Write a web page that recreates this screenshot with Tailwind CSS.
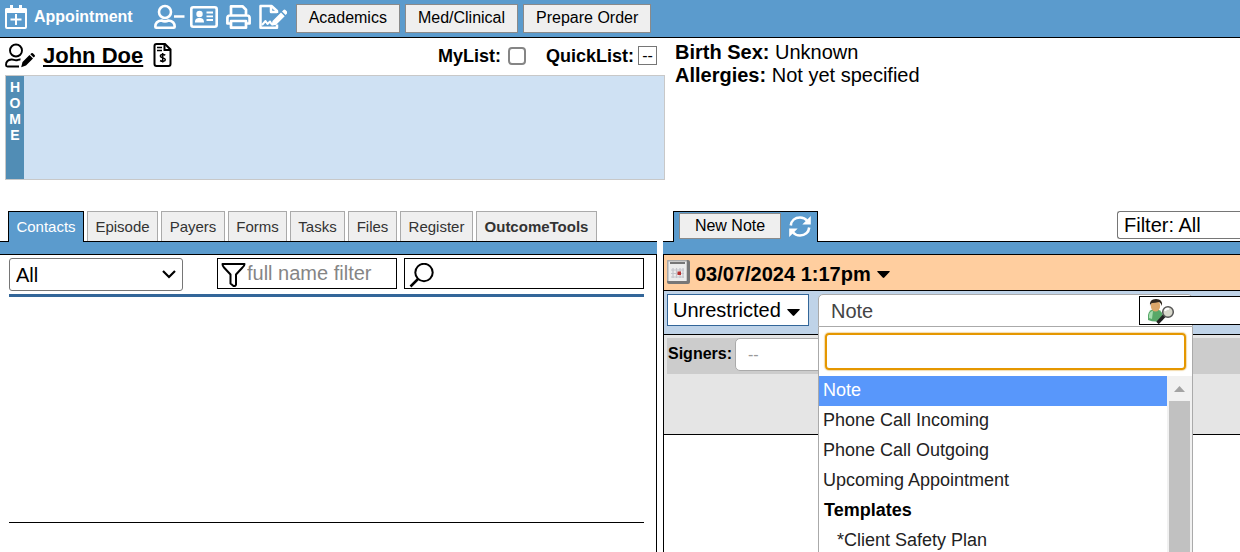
<!DOCTYPE html>
<html lang="en">
<head>
<meta charset="utf-8">
<title>John Doe - Chart</title>
<script src="https://cdn.jsdelivr.net/npm/@tailwindcss/browser@4"></script>
</head>
<body class="flex h-screen flex-col overflow-hidden bg-white font-['Liberation_Sans',Arial,sans-serif] text-black">

<header class="flex h-[38px] shrink-0 items-start border-b border-black bg-[#5b9bcd] pt-1 pl-[5px] text-white">
  <a href="#" class="flex items-start gap-[7px] text-base font-bold leading-[26px]">
    <svg class="h-[26px] w-[22px]" viewBox="0 0 22 26" fill="none" stroke="currentColor" stroke-width="2"><rect x="1" y="5" width="20" height="19" rx="1"/><path d="M0 6q0-2 2-2h18q2 0 2 2v3H0z" fill="currentColor" stroke="none"/><path d="M6.500 1v5M15.500 1v5" stroke-width="3"/><path d="M11 10v11M5.500 15.500h11"/></svg>
    <span>Appointment</span>
  </a>
  <nav class="ml-[21px] flex gap-[5px]">
    <button aria-label="Remove person"><svg class="h-[26px] w-[31px]" viewBox="0 0 31 26" fill="none" stroke="currentColor" stroke-width="2.600"><ellipse cx="11" cy="8" rx="6" ry="6"/><path d="M7.500 16.500c-4 .5-6.200 3-6.200 6.200q0 1 1 1h17.400q1 0 1-1c0-3.200-2.200-5.700-6.200-6.200-2 1-5 1-7 0zM20 12.500h10.500"/></svg></button>
    <button aria-label="ID card"><svg class="h-[26px] w-[28px]" viewBox="0 0 28 26"><rect x="1.300" y="3.300" width="25.400" height="19.400" rx="2" fill="none" stroke="currentColor" stroke-width="2.600"/><g fill="currentColor"><circle cx="9.500" cy="10" r="3.200"/><path d="M5 18.500c0-3.500 1.500-4.500 4.500-4.500s4.500 1 4.500 4.500zM16.500 7.500h6.500v2h-6.500zM16.500 11.500h6.500v1.700h-6.500zM16.500 15h6.500v2h-6.500z"/></g></svg></button>
    <button aria-label="Print" class="ml-[3px]"><svg class="h-[26px] w-[25px]" viewBox="0 0 25 26" fill="none" stroke="currentColor" stroke-width="2.700" stroke-linejoin="round"><path d="M5 12V2.300h11.500l3.500 3.500V12M5 19.500H1.400V14q0-2.500 2.500-2.500h17.200q2.500 0 2.500 2.500v5.500H20M5 17h15v6.700H5z"/></svg></button>
    <button aria-label="Sign document" class="ml-[3px]"><svg class="h-[26px] w-[28px]" viewBox="0 0 28 26" fill="none" stroke="currentColor" stroke-width="2.500" stroke-linejoin="round"><path d="M18 9V7l-5.500-5H1.500v21.700H18V20.500"/><path d="M12 2v6h6"/><path d="M3 21l3.500-4 2 3 2.500-2.500 1.500 2.500h4" stroke-width="2"/><path d="M13.500 17L22 8.500l3.700 3.700L17.200 20.700l-4.700 1.100zM23 7.500l1.500-1.500q1-.8 2 0l1.500 1.600q.8 1 0 2l-1.400 1.500z" fill="currentColor" stroke="none"/></svg></button>
  </nav>
  <div class="ml-[9px] flex gap-[5px] text-base leading-6 text-black">
    <button class="h-[29px] border border-[#8a8a8a] bg-[#efefef] px-3 pb-[2px]">Academics</button>
    <button class="h-[29px] border border-[#8a8a8a] bg-[#efefef] px-3 pb-[2px]">Med/Clinical</button>
    <button class="h-[29px] border border-[#8a8a8a] bg-[#efefef] px-3 pb-[2px]">Prepare Order</button>
  </div>
</header>

<section class="grid h-[173px] shrink-0 grid-cols-[665fr_575fr]">
  <div class="pl-[5px]">
    <div class="flex h-[37px] items-center pr-2 pb-[2px]">
      <svg class="h-[26px] w-[30px]" viewBox="0 0 30 26" fill="none" stroke="currentColor" stroke-width="1.900"><circle cx="11" cy="7.500" r="6"/><path d="M15.500 16.500c-2-.3-2.500.8-4.500.8s-2.500-1-4.500-.8c-3.500.3-5.500 2-5.500 5.500q0 1.500 1.500 1.500H14"/><path d="M17.500 19l7-7 3.500 3.500-7 7-4.800 1.800zM25.300 11.200l1-1q.8-.6 1.600 0l1.700 1.700q.8.900 0 1.800l-.9.900z" fill="currentColor" stroke="none"/></svg>
      <a href="#" class="ml-2 text-[22px] font-bold leading-6 underline decoration-2 underline-offset-2">John Doe</a>
      <button aria-label="Billing" class="ml-[10px]"><svg class="h-[26px] w-[19px]" viewBox="0 0 19 26" fill="none" stroke="currentColor" stroke-width="2"><path d="M1.500 3q0-2 2-2H12l5.500 5.500V21q0 2-2 2h-12q-2 0-2-2z"/><path d="M11.500 1v6h6"/><path d="M4 4.500h5M4 7.500h5" stroke-width="1.500"/><path d="M12.300 12.200c-2-1.200-5-.9-5 .9 0 2.200 5 1.300 5 3.600 0 1.900-3.300 2-5.200.8M9.700 10v9.500" stroke-width="1.500"/></svg></button>
      <div class="ml-auto flex items-center text-lg font-bold leading-6">
        <label for="mylist">MyList:</label>
        <input id="mylist" type="checkbox" class="ml-[7px] size-[18px] appearance-none rounded-[4px] border-2 border-[#858585] bg-white">
        <label for="quick" class="ml-5">QuickList:</label>
        <button id="quick" class="ml-1 h-[19px] w-[19px] border border-[#767676] text-base font-normal leading-4">--</button>
      </div>
    </div>
    <div class="flex h-[105px] border border-[#c8c8c8] bg-[#cfe1f3]">
      <button class="flex w-[18px] flex-col items-center bg-[#518db5] pt-[3px] text-sm font-bold leading-4 text-white" aria-label="Home"><span>H</span><span>O</span><span>M</span><span>E</span></button>
    </div>
  </div>
  <div class="pl-[10px] pt-[3px] text-xl leading-[23px]">
    <p><b>Birth Sex:</b> Unknown</p>
    <p><b>Allergies:</b> Not yet specified</p>
  </div>
</section>

<main class="grid min-h-0 flex-1 grid-cols-[657fr_577fr] gap-x-[6px]">
  <section class="flex min-w-0 flex-col">
    <nav class="flex h-[31px] items-start gap-[3px] pl-2 text-[15px] text-[#333]">
      <button class="z-10 h-[31px] w-[76px] border border-b-0 border-black bg-[#5b9bcd] text-white">Contacts</button>
      <button class="h-[30px] w-[71px] border border-b-0 border-[#aaa] bg-[#efefef] pt-px">Episode</button>
      <button class="h-[30px] w-16 border border-b-0 border-[#aaa] bg-[#efefef] pt-px">Payers</button>
      <button class="h-[30px] w-[59px] border border-b-0 border-[#aaa] bg-[#efefef] pt-px">Forms</button>
      <button class="h-[30px] w-[55px] border border-b-0 border-[#aaa] bg-[#efefef] pt-px">Tasks</button>
      <button class="h-[30px] w-[49px] border border-b-0 border-[#aaa] bg-[#efefef] pt-px">Files</button>
      <button class="h-[30px] w-[73px] border border-b-0 border-[#aaa] bg-[#efefef] pt-px">Register</button>
      <button class="h-[30px] w-[121px] border border-b-0 border-[#aaa] bg-[#efefef] pt-px font-bold">OutcomeTools</button>
    </nav>
    <div class="-mt-px h-[14px] shrink-0 border-y border-black bg-[#5b9bcd]"></div>
    <div class="flex flex-1 flex-col border-r border-black pt-[3px] pr-3 pb-[29px] pl-[9px]">
      <div class="flex items-start">
        <div class="relative">
          <select aria-label="Contact type" class="h-[33px] w-[174px] appearance-none rounded-[3px] border border-[#767676] bg-white pl-[6px] text-xl leading-6"><option>All</option></select>
          <svg class="pointer-events-none absolute top-[11px] right-[7px] h-[10px] w-[14px]" viewBox="0 0 14 10" fill="none" stroke="currentColor" stroke-width="2.200"><path d="M1 2l6 6 6-6"/></svg>
        </div>
        <label class="ml-[34px] flex h-[31px] w-[180px] items-start border border-black">
          <svg class="mt-[3px] ml-[3px] h-[26px] w-[25px] shrink-0" viewBox="0 0 25 26" fill="none" stroke="currentColor" stroke-width="2" stroke-linejoin="round"><path d="M1.500 2h22q0 2-2 3.500L15 12.500v10q-.5 2-2.500 1.500L9.500 21.500v-9L3 5.500Q1.500 4 1.500 2z"/></svg>
          <input aria-label="Full name filter" placeholder="full name filter" class="ml-px h-7 min-w-0 flex-1 text-xl leading-7 outline-none placeholder:text-[#858585]">
        </label>
        <label class="ml-[7px] flex h-[31px] min-w-0 flex-1 items-start border border-black">
          <svg class="mt-1 ml-1 h-[25px] w-[26px] shrink-0" viewBox="0 0 26 25" fill="none" stroke="currentColor" stroke-width="2"><circle cx="15" cy="9.500" r="8.700"/><path d="M9 16l-7.500 7.500" stroke-width="2.500"/></svg>
          <input aria-label="Search" class="h-7 min-w-0 flex-1 outline-none">
        </label>
      </div>
      <div class="mt-[3px] h-[3px] bg-[#336699]"></div>
      <div class="flex-1 border-b border-black"></div>
    </div>
  </section>

  <section class="flex min-w-0 flex-col">
    <div class="flex h-[31px] items-start pl-[10px]">
      <div class="z-10 flex h-[31px] w-[145px] items-start border border-b-0 border-black bg-[#5b9bcd] pt-px pl-[5px]">
        <button class="h-[26px] w-[102px] border border-[#8a8a8a] bg-[#efefef] text-base leading-6">New Note</button>
        <button aria-label="Refresh" class="mt-[2px] ml-2 text-white"><svg class="h-[23px] w-[22px]" viewBox="0 0 22 23" fill="none" stroke="currentColor" stroke-width="2.600"><path d="M1.800 10.500C2.300 5.500 6 2.500 11 2.500c3 0 5.500 1.200 7.500 3.500M20.200 12.500c-.5 5-4.200 8-9.200 8-3 0-5.500-1.200-7.500-3.500"/><path d="M21.800 1v8.500h-8.500zM.2 22v-8.500h8.500z" fill="currentColor" stroke="none"/></svg></button>
      </div>
      <select aria-label="Note filter" class="ml-auto h-7 w-[123px] appearance-none rounded-l-[3px] border border-r-0 border-[#767676] bg-white pl-[6px] text-xl leading-6"><option>Filter: All</option></select>
    </div>
    <div class="-mt-px h-[14px] shrink-0 border-y border-black bg-[#5b9bcd]"></div>
    <div class="flex-1 border-l border-black">
      <div class="flex h-9 items-center border-b border-black bg-[#ffce9f] pl-[3px]">
        <svg class="mb-[2px] h-6 w-[23px]" viewBox="0 0 23 24"><rect width="23" height="24" rx="2" fill="#777"/><rect width="20" height="21" rx="1" fill="#a8a8a8"/><rect x="1.500" y="1.500" width="18" height="19.500" fill="#ececec"/><path d="M3 3h15" stroke="#444" stroke-width="1.400"/><path d="M4 10h13M4 13.500h13M4 17h13M6 8v10M9.500 8v10M13 8v10M16 8v10" stroke="#c4c4ca" stroke-width="1.200"/><rect x="10.500" y="11.500" width="3.500" height="3.500" fill="#b83030"/></svg>
        <button class="mt-[2px] ml-[5px] flex items-center text-xl font-bold leading-6">03/07/2024 1:17pm<svg class="mt-[2px] ml-[6px] h-[7px] w-[13px]" viewBox="0 0 13 7"><path d="M1 0h11q1.500 0 .5 1L7.300 6.500q-.8.800-1.600 0L.5 1Q-.5 0 1 0z"/></svg></button>
      </div>
      <div class="flex h-11 items-start border-b border-black bg-[#bfd3e8] pt-[3px] pl-[3px]">
        <button class="flex h-8 w-[142px] items-center border border-[#336699] bg-white pl-[5px] text-xl leading-6">Unrestricted<svg class="mt-1 ml-[6px] h-[7px] w-[13px]" viewBox="0 0 13 7"><path d="M1 0h11q1.500 0 .5 1L7.300 6.500q-.8.800-1.600 0L.5 1Q-.5 0 1 0z"/></svg></button>
        <div class="relative z-10 ml-[9px] w-[375px] shrink-0">
          <button class="block h-[33px] w-full rounded-t-[5px] border border-[#aaa] bg-white pl-3 text-left text-xl leading-8 text-[#444]">Note</button>
          <div class="absolute top-full left-0 w-full border-x border-[#aaa] bg-white pt-[6px] text-lg leading-[30px]">
            <input aria-label="Search note types" class="mx-[6px] block h-[37px] w-[361px] rounded-[4px] border-2 border-[#e59700] shadow-[0_0_1px_1px_#f3dcae] outline-none">
            <div class="mt-[6px] flex text-[#222]">
              <ul class="flex-1">
                <li class="h-[30px] bg-[#5897fb] pl-1 leading-7 text-white">Note</li>
                <li class="h-[30px] pl-1 leading-7">Phone Call Incoming</li>
                <li class="h-[30px] pl-1 leading-7">Phone Call Outgoing</li>
                <li class="h-[30px] pl-1 leading-7">Upcoming Appointment</li>
                <li class="h-[30px] pl-[5px] leading-7 font-bold text-black">Templates</li>
                <li class="h-[30px] pl-[18px] leading-7">*Client Safety Plan</li>
              </ul>
              <div class="flex w-[25px] flex-col items-center bg-[#f1f1f1] pt-[10px]">
                <svg class="h-[6px] w-[11px] shrink-0" viewBox="0 0 11 6"><path d="M0 6l5.500-6L11 6z" fill="#a3a3a3"/></svg>
                <div class="mt-[9px] w-[21px] flex-1 bg-[#c1c1c1]"></div>
              </div>
            </div>
          </div>
        </div>
        <button aria-label="Find person" class="z-20 mt-[2px] -ml-[54px] h-[29px] min-w-0 flex-1 border border-r-0 border-black bg-white pl-2">
          <svg class="h-[26px] w-[27px]" viewBox="0 0 27 26"><path d="M0 22v-5q1-6 7-6t8 6v5q-7 3-15 0z" fill="#58a868"/><path d="M1 20v-3q1-4 4-4l-1 8z" fill="#a5dcae"/><ellipse cx="7.500" cy="8" rx="4.700" ry="5.500" fill="#dba76a"/><path d="M2 8Q1 1 8 1t6 7q-1-3-3-4-4 1-7 1-2 1-2 3z" fill="#30281f"/><path d="M16.500 17.500L9.500 25" stroke="#222" stroke-width="3.500"/><circle cx="20" cy="14" r="5.300" fill="#d8d8cc" stroke="#555" stroke-width="1.500"/><path d="M17 13q1-3 4-2" stroke="#fff" stroke-width="2" fill="none"/></svg>
        </button>
      </div>
      <div class="h-[100px] border-b border-black bg-[#e5e5e5] pt-[3px] pl-[3px]">
        <div class="flex h-9 items-start bg-[#ccc] pl-px">
          <label for="signers" class="text-base font-bold leading-8">Signers:</label>
          <input id="signers" placeholder="--" class="ml-[3px] h-[33px] w-[375px] rounded-[5px] border border-[#aaa] bg-white pl-3 text-base text-[#999] placeholder:text-[#999]">
        </div>
      </div>
    </div>
  </section>
</main>
</body>
</html>
